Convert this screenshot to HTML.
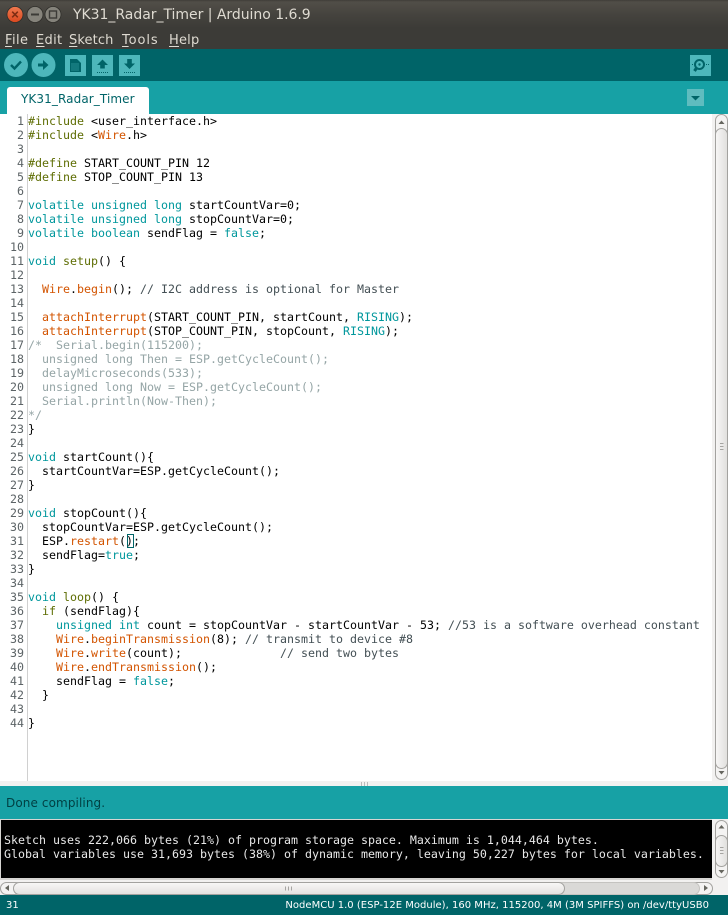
<!DOCTYPE html>
<html><head><meta charset="utf-8">
<style>
html,body{margin:0;padding:0;width:728px;height:915px;overflow:hidden;background:#f2f1f0}
div{position:absolute;box-sizing:border-box}
.mono{font-family:"DejaVu Sans Mono","Liberation Mono",monospace;font-size:11.63px;line-height:14px;white-space:pre}
.k{color:#00979c}.f{color:#d35400}.p{color:#5e6d03}.c{color:#95a5a6}.s{color:#434f54}
.sans{font-family:"DejaVu Sans","Liberation Sans",sans-serif;white-space:pre}
.m{position:absolute;top:32px;font-size:13px;line-height:17px;color:#dfdbd2;font-family:"DejaVu Sans",sans-serif;white-space:pre}
u{text-decoration-thickness:1px;text-underline-offset:2px}
svg{position:absolute;overflow:visible}
</style></head><body>
<div style="left:0;top:0;width:728px;height:49px;background:linear-gradient(#3f3d39 0,#514e48 2px,#45433e 15px,#3c3b37 28px,#3c3b37 49px)"></div>
<svg style="left:0;top:0" width="70" height="30">
<defs><linearGradient id="o" x1="0" y1="0" x2="0" y2="1"><stop offset="0" stop-color="#f0794f"/><stop offset="1" stop-color="#d9481f"/></linearGradient></defs>
<circle cx="15" cy="14.500" r="8" fill="url(#o)" stroke="#2f2e2a" stroke-width=".8"/><path d="M12.200 11.700l5.600 5.600M17.800 11.700l-5.600 5.600" stroke="#7c2c12" stroke-width="1.500"/>
<circle cx="35" cy="14.500" r="8" fill="#85837b" stroke="#2f2e2a" stroke-width=".8"/><rect x="31" y="13.500" width="8" height="2" fill="#3c3b37"/>
<circle cx="53" cy="14.500" r="8" fill="#85837b" stroke="#2f2e2a" stroke-width=".8"/><rect x="49.500" y="11" width="7" height="7" fill="none" stroke="#3c3b37" stroke-width="1.400"/>
</svg>
<div class="sans" style="left:73px;top:6px;font-size:14px;line-height:18px;color:#dfdbd2;letter-spacing:-.03px">YK31_Radar_Timer | Arduino 1.6.9</div>
<span class="m" style="left:5px;letter-spacing:.4px"><u>F</u>ile</span>
<span class="m" style="left:36px;letter-spacing:.3px"><u>E</u>dit</span>
<span class="m" style="left:69px;letter-spacing:.1px"><u>S</u>ketch</span>
<span class="m" style="left:122px;letter-spacing:.9px"><u>T</u>ools</span>
<span class="m" style="left:169px;letter-spacing:.2px"><u>H</u>elp</span>

<div style="left:0;top:49px;width:728px;height:32px;background:#006468"></div>
<svg style="left:0;top:49px" width="728" height="32">
<circle cx="16" cy="16" r="12" fill="#4db7bb"/><path d="M11 16l3.500 3.500 6.500-7" fill="none" stroke="#006468" stroke-width="2.400"/>
<circle cx="43.500" cy="16" r="12" fill="#4db7bb"/><path d="M38 14.500h5v-3.500l5.500 5-5.500 5v-3.500h-5z" fill="#006468"/>
<rect x="65" y="6" width="21" height="21" fill="#4db7bb"/><path d="M70 10h7l4 4v9h-11z" fill="#006468"/><path d="M71.500 15h8M71.500 17h8M71.500 19h8M71.500 21h8" stroke="#4db7bb" stroke-dasharray="1 1"/>
<rect x="92" y="6" width="21" height="21" fill="#4db7bb"/><path d="M102.500 10.500l5.500 5.500h-3.200v3.500h-4.600V16H97z" fill="#006468"/><path d="M97 23.500h11" stroke="#006468" stroke-dasharray="1 1"/>
<rect x="119" y="6" width="21" height="21" fill="#4db7bb"/><path d="M127.200 10h4.600v4.500h3.200l-5.500 5.500-5.500-5.500h3.200z" fill="#006468"/><path d="M124 23.500h11" stroke="#006468" stroke-dasharray="1 1"/>
<rect x="690" y="6" width="21" height="21" fill="#4db7bb"/><circle cx="699.500" cy="15.500" r="4.500" fill="none" stroke="#006468" stroke-width="2"/><circle cx="699.500" cy="15.500" r="1.200" fill="#006468"/><path d="M696.500 19l-2 3" stroke="#006468" stroke-width="3"/><path d="M692 15.500h2M706 15.500h3" stroke="#006468" stroke-dasharray="1 1"/>
</svg>

<div style="left:0;top:81px;width:728px;height:33px;background:#17a1a5"></div>
<div style="left:7px;top:87px;width:142px;height:27px;background:#fff;border-radius:3px 3px 0 0"></div>
<div class="sans" style="left:21px;top:91px;font-size:12px;line-height:17px;color:#006468;letter-spacing:.1px">YK31_Radar_Timer</div>
<svg style="left:687px;top:89px" width="17" height="17"><rect width="17" height="17" fill="#5fbcbf"/><path d="M4 7h9l-4.500 4.500z" fill="#006468"/></svg>

<div style="left:0;top:114px;width:712px;height:667px;background:#fff"></div>
<div style="left:27px;top:114px;width:1px;height:667px;background:#d0d0d0"></div>
<div class="mono" style="left:0;top:114px;width:24px;text-align:right;color:#5c6366">1
2
3
4
5
6
7
8
9
10
11
12
13
14
15
16
17
18
19
20
21
22
23
24
25
26
27
28
29
30
31
32
33
34
35
36
37
38
39
40
41
42
43
44</div>
<div style="left:127px;top:534px;width:7px;height:14px;border:1px solid #006468"></div>
<div class="mono" style="left:28px;top:114px;width:672px;overflow:hidden;color:#000"><span class="p">#include</span> &lt;user_interface.h&gt;
<span class="p">#include</span> &lt;<span class="f">Wire</span>.h&gt;

<span class="p">#define</span> START_COUNT_PIN 12
<span class="p">#define</span> STOP_COUNT_PIN 13

<span class="k">volatile</span> <span class="k">unsigned</span> <span class="k">long</span> startCountVar=0;
<span class="k">volatile</span> <span class="k">unsigned</span> <span class="k">long</span> stopCountVar=0;
<span class="k">volatile</span> <span class="k">boolean</span> sendFlag = <span class="k">false</span>;

<span class="k">void</span> <span class="p">setup</span>() {

  <span class="f">Wire</span>.<span class="f">begin</span>(); <span class="s">// I2C address is optional for Master</span>

  <span class="f">attachInterrupt</span>(START_COUNT_PIN, startCount, <span class="k">RISING</span>);
  <span class="f">attachInterrupt</span>(STOP_COUNT_PIN, stopCount, <span class="k">RISING</span>);
<span class="c">/*  Serial.begin(115200);
  unsigned long Then = ESP.getCycleCount();
  delayMicroseconds(533);
  unsigned long Now = ESP.getCycleCount();
  Serial.println(Now-Then);
*/</span>
}

<span class="k">void</span> startCount(){
  startCountVar=ESP.getCycleCount();
}

<span class="k">void</span> stopCount(){
  stopCountVar=ESP.getCycleCount();
  ESP.<span class="f">restart</span>();
  sendFlag=<span class="k">true</span>;
}

<span class="k">void</span> <span class="p">loop</span>() {
  <span class="p">if</span> (sendFlag){
    <span class="k">unsigned</span> <span class="k">int</span> count = stopCountVar - startCountVar - 53; <span class="s">//53 is a software overhead constant</span>
    <span class="f">Wire</span>.<span class="f">beginTransmission</span>(8); <span class="s">// transmit to device #8</span>
    <span class="f">Wire</span>.<span class="f">write</span>(count);              <span class="s">// send two bytes</span>
    <span class="f">Wire</span>.<span class="f">endTransmission</span>();
    sendFlag = <span class="k">false</span>;
  }

}</div>

<svg style="left:715px;top:114px" width="13" height="667">
<defs><linearGradient id="g" x1="0" y1="0" x2="1" y2="0"><stop offset="0" stop-color="#f8f7f6"/><stop offset="1" stop-color="#e0dfdd"/></linearGradient></defs>
<rect x=".5" y=".5" width="12" height="665" rx="6" fill="#f4f3f2" stroke="#a3a29f"/>
<rect x=".5" y="14.500" width="12" height="640" rx="6" fill="url(#g)" stroke="#a3a29f"/>
<path d="M3.500 10l3-3.500 3 3.500zM3.500 657l3 3.500 3-3.500z" fill="#66665f"/>
<path d="M5 329.500h3.500M5 332.500h3.500M5 335.500h3.500" stroke="#a5a4a1"/></svg>

<div style="left:361px;top:782px;width:8px;height:4px;background:repeating-linear-gradient(90deg,#bbb 0 1px,#f2f1f0 1px 3px)"></div>
<div style="left:0;top:786px;width:728px;height:33px;background:#17a1a5"></div>
<div class="sans" style="left:6px;top:796px;font-size:12px;line-height:15px;color:#003f42;letter-spacing:.1px">Done compiling.</div>
<div style="left:0;top:819px;width:728px;height:61px;background:#d6d5d2"></div>
<div class="mono" style="left:1px;top:820px;width:711px;height:58px;background:#000;color:#e8e8e8;padding:13px 0 0 3px">Sketch uses 222,066 bytes (21%) of program storage space. Maximum is 1,044,464 bytes.
Global variables use 31,693 bytes (38%) of dynamic memory, leaving 50,227 bytes for local variables.</div>
<div style="left:712px;top:819px;width:16px;height:62px;background:#f2f1f0"></div>
<svg style="left:715px;top:820px" width="13" height="59">
<rect x=".5" y=".5" width="12" height="57" rx="6" fill="#f4f3f2" stroke="#a3a29f"/>
<rect x=".5" y="15.500" width="12" height="31" rx="6" fill="url(#g)" stroke="#a3a29f"/>
<path d="M3.500 8.500l3-3.500 3 3.500zM3.500 50l3 3.500 3-3.500z" fill="#66665f"/>
<path d="M5 27.500h3.500M5 30.500h3.500M5 33.500h3.500" stroke="#a5a4a1"/></svg>
<div style="left:0;top:880px;width:714px;height:15px;background:#f2f1f0"></div>
<svg style="left:0;top:881px" width="713" height="14">
<defs><linearGradient id="h" x1="0" y1="0" x2="0" y2="1"><stop offset="0" stop-color="#f9f8f7"/><stop offset="1" stop-color="#e2e1df"/></linearGradient></defs>
<rect x=".5" y="1.500" width="712" height="12" rx="6" fill="#f4f3f2" stroke="#a3a29f"/>
<rect x="13.500" y="1.500" width="686" height="12" rx="6" fill="#dad9d7" stroke="#c4c3c0"/>
<rect x="13.500" y="1.500" width="551" height="12" rx="6" fill="url(#h)" stroke="#a3a29f"/>
<path d="M9 4v6l-4-3zM704 4v6l4-3z" fill="#66665f"/>
<path d="M285.500 5.500v4M288.500 5.500v4M291.500 5.500v4" stroke="#a5a4a1"/></svg>
<div style="left:0;top:895px;width:728px;height:20px;background:#006468"></div>
<div class="sans" style="left:6px;top:899px;font-size:10px;line-height:13px;color:#fff">31</div>
<div class="sans" style="right:19px;top:899px;font-size:10px;line-height:13px;color:#fff;letter-spacing:.015px">NodeMCU 1.0 (ESP-12E Module), 160 MHz, 115200, 4M (3M SPIFFS) on /dev/ttyUSB0</div>
</body></html>
